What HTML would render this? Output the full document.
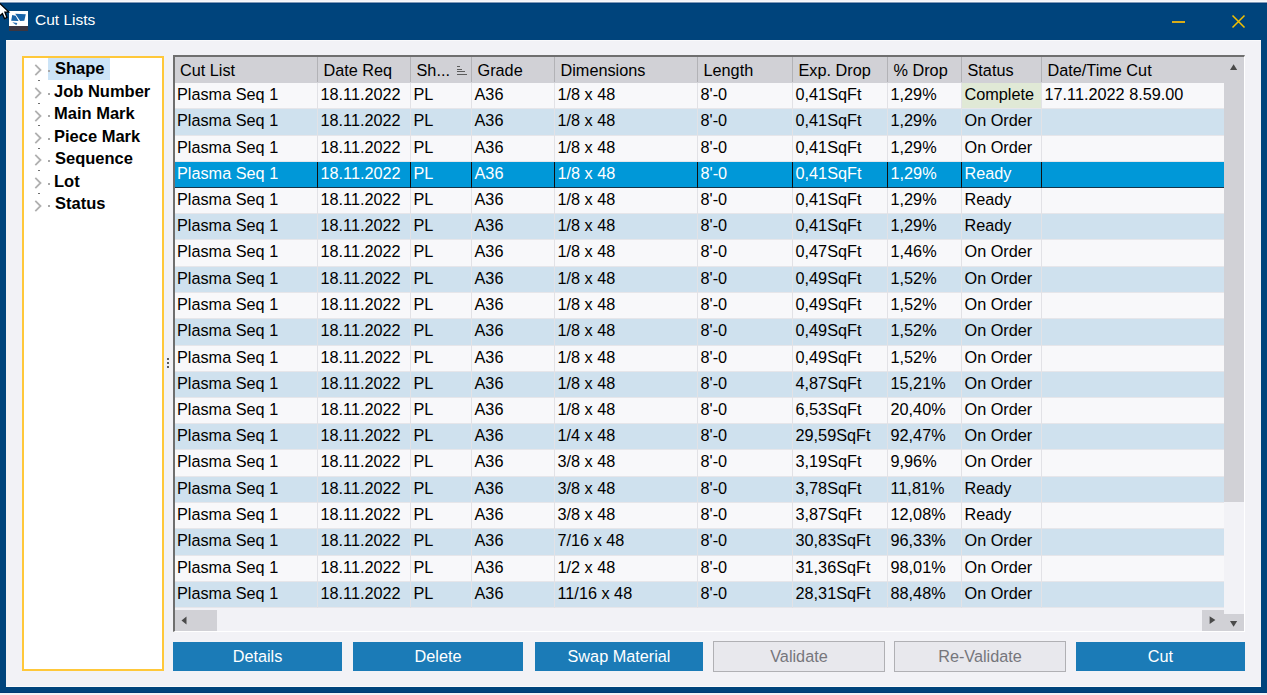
<!DOCTYPE html><html><head><meta charset="utf-8"><style>
*{margin:0;padding:0;box-sizing:border-box}
html,body{width:1267px;height:695px;overflow:hidden;background:#f2f2f6;font-family:"Liberation Sans",sans-serif}
.a{position:absolute}
.tx{font-size:16.25px;line-height:26px;white-space:nowrap;color:#000}
.ti{font-size:16.5px;font-weight:bold;color:#000;line-height:22px;white-space:nowrap}
.btn{font-size:16.25px;text-align:center;color:#fff;background:#1b7bb7;white-space:nowrap}
.dis{background:#e8e8ed;border:1px solid #b0b0b4;color:#76767c}
</style></head><body>
<div class="a" style="left:0;top:1px;width:1267px;height:1px;background:#f9f9fb"></div>
<div class="a" style="left:0;top:2px;width:1267px;height:691px;background:#00447c"></div>
<div class="a" style="left:0;top:2px;width:1267px;height:1px;background:#7f9ab8"></div>
<div class="a" style="left:0;top:3px;width:1267px;height:1px;background:#003c78"></div>
<div class="a" style="left:0;top:692px;width:1267px;height:1px;background:#003c76"></div>
<div class="a" style="left:9px;top:11px;width:19px;height:15px;background:#fff"></div>
<div class="a" style="left:9px;top:26px;width:19px;height:4.5px;background:#3b3641"></div>
<svg class="a" style="left:9px;top:11px" width="19" height="15" viewBox="0 0 19 15"><path d="M6.2 2.8 L16.8 3.2 L15.3 9.7 L11.2 9.9 Z" fill="#1763a8"/><path d="M3.2 4.1 L6.6 4.7 L9.6 9.9 L2.2 9.7 Z" fill="#1763a8"/><path d="M3.3 11.2 L8.3 12 L7.4 14.3 Z" fill="#2a6db0"/></svg>
<div class="a" style="left:35px;top:10px;font-size:15.5px;line-height:20px;color:#fff;white-space:nowrap">Cut Lists</div>
<div class="a" style="left:1172px;top:21px;width:13px;height:1.5px;background:#d8ab18"></div>
<svg class="a" style="left:1230px;top:13px" width="17" height="17" viewBox="0 0 17 17"><path d="M2.5 2.5 L14.5 14.5 M14.5 2.5 L2.5 14.5" stroke="#f5c000" stroke-width="1.5"/></svg>
<div class="a" style="left:6px;top:40px;width:1255px;height:647px;background:#f2f2f6"></div>
<div class="a" style="left:6px;top:40px;width:1255px;height:1px;background:#f9f9fb"></div>
<div class="a" style="left:6px;top:686px;width:1255px;height:1px;background:#fbfbfc"></div>
<div class="a" style="left:22px;top:56px;width:142px;height:615px;background:#fff;border:2px solid #ffc83a"></div>
<div class="a" style="left:48px;top:58px;width:62px;height:22px;background:#cce4f7"></div>
<div class="a ti" style="left:55px;top:57px">Shape</div>
<svg class="a" style="left:33px;top:63px" width="10" height="14" viewBox="0 0 10 14"><path d="M2.3 1.9 L7.5 7 L2.3 12.1" fill="none" stroke="#b0b0b0" stroke-width="1.8"/></svg>
<div class="a" style="left:48px;top:70px;width:2px;height:2px;background:#a8a8a8"></div>
<div class="a" style="left:38px;top:80px;width:2px;height:1px;background:#707070"></div>
<div class="a ti" style="left:54px;top:80px">Job Number</div>
<svg class="a" style="left:33px;top:86px" width="10" height="14" viewBox="0 0 10 14"><path d="M2.3 1.9 L7.5 7 L2.3 12.1" fill="none" stroke="#b0b0b0" stroke-width="1.8"/></svg>
<div class="a" style="left:48px;top:93px;width:2px;height:2px;background:#a8a8a8"></div>
<div class="a" style="left:38px;top:103px;width:2px;height:1px;background:#707070"></div>
<div class="a ti" style="left:54px;top:102px">Main Mark</div>
<svg class="a" style="left:33px;top:109px" width="10" height="14" viewBox="0 0 10 14"><path d="M2.3 1.9 L7.5 7 L2.3 12.1" fill="none" stroke="#b0b0b0" stroke-width="1.8"/></svg>
<div class="a" style="left:48px;top:115px;width:2px;height:2px;background:#a8a8a8"></div>
<div class="a" style="left:38px;top:125px;width:2px;height:1px;background:#707070"></div>
<div class="a ti" style="left:54px;top:125px">Piece Mark</div>
<svg class="a" style="left:33px;top:131px" width="10" height="14" viewBox="0 0 10 14"><path d="M2.3 1.9 L7.5 7 L2.3 12.1" fill="none" stroke="#b0b0b0" stroke-width="1.8"/></svg>
<div class="a" style="left:48px;top:138px;width:2px;height:2px;background:#a8a8a8"></div>
<div class="a" style="left:38px;top:148px;width:2px;height:1px;background:#707070"></div>
<div class="a ti" style="left:55px;top:147px">Sequence</div>
<svg class="a" style="left:33px;top:153px" width="10" height="14" viewBox="0 0 10 14"><path d="M2.3 1.9 L7.5 7 L2.3 12.1" fill="none" stroke="#b0b0b0" stroke-width="1.8"/></svg>
<div class="a" style="left:48px;top:160px;width:2px;height:2px;background:#a8a8a8"></div>
<div class="a" style="left:38px;top:170px;width:2px;height:1px;background:#707070"></div>
<div class="a ti" style="left:54px;top:170px">Lot</div>
<svg class="a" style="left:33px;top:176px" width="10" height="14" viewBox="0 0 10 14"><path d="M2.3 1.9 L7.5 7 L2.3 12.1" fill="none" stroke="#b0b0b0" stroke-width="1.8"/></svg>
<div class="a" style="left:48px;top:183px;width:2px;height:2px;background:#a8a8a8"></div>
<div class="a" style="left:38px;top:193px;width:2px;height:1px;background:#707070"></div>
<div class="a ti" style="left:55px;top:192px">Status</div>
<svg class="a" style="left:33px;top:199px" width="10" height="14" viewBox="0 0 10 14"><path d="M2.3 1.9 L7.5 7 L2.3 12.1" fill="none" stroke="#b0b0b0" stroke-width="1.8"/></svg>
<div class="a" style="left:48px;top:205px;width:2px;height:2px;background:#a8a8a8"></div>
<div class="a" style="left:173px;top:55px;width:73px;height:0"></div>
<div class="a" style="left:173px;top:55px;width:1072px;height:577px;background:#f2f2f6;border-left:2px solid #6f6f6f;border-top:2px solid #6f6f6f;border-right:1px solid #fff;border-bottom:1px solid #fff"></div>
<div class="a" style="left:175px;top:57px;width:1069px;height:26px;background:#d1d1d6"></div>
<div class="a tx" style="left:180px;top:57px">Cut List</div>
<div class="a" style="left:317px;top:57px;width:1px;height:25px;background:#b2b2b6"></div>
<div class="a tx" style="left:323.5px;top:57px">Date Req</div>
<div class="a" style="left:410px;top:57px;width:1px;height:25px;background:#b2b2b6"></div>
<div class="a tx" style="left:416.5px;top:57px">Sh...</div>
<div class="a" style="left:471px;top:57px;width:1px;height:25px;background:#b2b2b6"></div>
<div class="a tx" style="left:477.5px;top:57px">Grade</div>
<div class="a" style="left:554px;top:57px;width:1px;height:25px;background:#b2b2b6"></div>
<div class="a tx" style="left:560.5px;top:57px">Dimensions</div>
<div class="a" style="left:697px;top:57px;width:1px;height:25px;background:#b2b2b6"></div>
<div class="a tx" style="left:703.5px;top:57px">Length</div>
<div class="a" style="left:792px;top:57px;width:1px;height:25px;background:#b2b2b6"></div>
<div class="a tx" style="left:798.5px;top:57px">Exp. Drop</div>
<div class="a" style="left:887px;top:57px;width:1px;height:25px;background:#b2b2b6"></div>
<div class="a tx" style="left:893.5px;top:57px">% Drop</div>
<div class="a" style="left:961px;top:57px;width:1px;height:25px;background:#b2b2b6"></div>
<div class="a tx" style="left:967.5px;top:57px">Status</div>
<div class="a" style="left:1041px;top:57px;width:1px;height:25px;background:#b2b2b6"></div>
<div class="a tx" style="left:1047.5px;top:57px">Date/Time Cut</div>
<div class="a" style="left:457px;top:66px;width:3px;height:1px;background:#5c5c5c"></div>
<div class="a" style="left:457px;top:69px;width:5px;height:1px;background:#5c5c5c"></div>
<div class="a" style="left:457px;top:71px;width:8px;height:1px;background:#5c5c5c"></div>
<div class="a" style="left:457px;top:74px;width:10px;height:1px;background:#5c5c5c"></div>
<div class="a" style="left:175px;top:83px;width:1049px;height:26px;background:#f8f8fa"></div>
<div class="a" style="left:175px;top:108px;width:1049px;height:1px;background:#e6e6ea"></div>
<div class="a" style="left:962px;top:83px;width:79px;height:25px;background:#e0e9d6"></div>
<div class="a tx" style="left:177px;top:81px;color:#000">Plasma Seq 1</div>
<div class="a" style="left:317px;top:83px;width:1px;height:26px;background:#e2e2e6"></div>
<div class="a tx" style="left:320.5px;top:81px;color:#000">18.11.2022</div>
<div class="a" style="left:410px;top:83px;width:1px;height:26px;background:#e2e2e6"></div>
<div class="a tx" style="left:413.5px;top:81px;color:#000">PL</div>
<div class="a" style="left:471px;top:83px;width:1px;height:26px;background:#e2e2e6"></div>
<div class="a tx" style="left:474.5px;top:81px;color:#000">A36</div>
<div class="a" style="left:554px;top:83px;width:1px;height:26px;background:#e2e2e6"></div>
<div class="a tx" style="left:557.5px;top:81px;color:#000">1/8 x 48</div>
<div class="a" style="left:697px;top:83px;width:1px;height:26px;background:#e2e2e6"></div>
<div class="a tx" style="left:700.5px;top:81px;color:#000">8'-0</div>
<div class="a" style="left:792px;top:83px;width:1px;height:26px;background:#e2e2e6"></div>
<div class="a tx" style="left:795.5px;top:81px;color:#000">0,41SqFt</div>
<div class="a" style="left:887px;top:83px;width:1px;height:26px;background:#e2e2e6"></div>
<div class="a tx" style="left:890.5px;top:81px;color:#000">1,29%</div>
<div class="a" style="left:961px;top:83px;width:1px;height:26px;background:#e2e2e6"></div>
<div class="a tx" style="left:964.5px;top:81px;color:#000">Complete</div>
<div class="a" style="left:1041px;top:83px;width:1px;height:26px;background:#e2e2e6"></div>
<div class="a tx" style="left:1044.5px;top:81px;color:#000">17.11.2022 8.59.00</div>
<div class="a" style="left:175px;top:109px;width:1049px;height:27px;background:#cfe1ee"></div>
<div class="a" style="left:175px;top:135px;width:1049px;height:1px;background:#e6e6ea"></div>
<div class="a tx" style="left:177px;top:107px;color:#000">Plasma Seq 1</div>
<div class="a" style="left:317px;top:109px;width:1px;height:27px;background:#e2e2e6"></div>
<div class="a tx" style="left:320.5px;top:107px;color:#000">18.11.2022</div>
<div class="a" style="left:410px;top:109px;width:1px;height:27px;background:#e2e2e6"></div>
<div class="a tx" style="left:413.5px;top:107px;color:#000">PL</div>
<div class="a" style="left:471px;top:109px;width:1px;height:27px;background:#e2e2e6"></div>
<div class="a tx" style="left:474.5px;top:107px;color:#000">A36</div>
<div class="a" style="left:554px;top:109px;width:1px;height:27px;background:#e2e2e6"></div>
<div class="a tx" style="left:557.5px;top:107px;color:#000">1/8 x 48</div>
<div class="a" style="left:697px;top:109px;width:1px;height:27px;background:#e2e2e6"></div>
<div class="a tx" style="left:700.5px;top:107px;color:#000">8'-0</div>
<div class="a" style="left:792px;top:109px;width:1px;height:27px;background:#e2e2e6"></div>
<div class="a tx" style="left:795.5px;top:107px;color:#000">0,41SqFt</div>
<div class="a" style="left:887px;top:109px;width:1px;height:27px;background:#e2e2e6"></div>
<div class="a tx" style="left:890.5px;top:107px;color:#000">1,29%</div>
<div class="a" style="left:961px;top:109px;width:1px;height:27px;background:#e2e2e6"></div>
<div class="a tx" style="left:964.5px;top:107px;color:#000">On Order</div>
<div class="a" style="left:1041px;top:109px;width:1px;height:27px;background:#e2e2e6"></div>
<div class="a" style="left:175px;top:136px;width:1049px;height:26px;background:#f8f8fa"></div>
<div class="a" style="left:175px;top:161px;width:1049px;height:1px;background:#e6e6ea"></div>
<div class="a tx" style="left:177px;top:134px;color:#000">Plasma Seq 1</div>
<div class="a" style="left:317px;top:136px;width:1px;height:26px;background:#e2e2e6"></div>
<div class="a tx" style="left:320.5px;top:134px;color:#000">18.11.2022</div>
<div class="a" style="left:410px;top:136px;width:1px;height:26px;background:#e2e2e6"></div>
<div class="a tx" style="left:413.5px;top:134px;color:#000">PL</div>
<div class="a" style="left:471px;top:136px;width:1px;height:26px;background:#e2e2e6"></div>
<div class="a tx" style="left:474.5px;top:134px;color:#000">A36</div>
<div class="a" style="left:554px;top:136px;width:1px;height:26px;background:#e2e2e6"></div>
<div class="a tx" style="left:557.5px;top:134px;color:#000">1/8 x 48</div>
<div class="a" style="left:697px;top:136px;width:1px;height:26px;background:#e2e2e6"></div>
<div class="a tx" style="left:700.5px;top:134px;color:#000">8'-0</div>
<div class="a" style="left:792px;top:136px;width:1px;height:26px;background:#e2e2e6"></div>
<div class="a tx" style="left:795.5px;top:134px;color:#000">0,41SqFt</div>
<div class="a" style="left:887px;top:136px;width:1px;height:26px;background:#e2e2e6"></div>
<div class="a tx" style="left:890.5px;top:134px;color:#000">1,29%</div>
<div class="a" style="left:961px;top:136px;width:1px;height:26px;background:#e2e2e6"></div>
<div class="a tx" style="left:964.5px;top:134px;color:#000">On Order</div>
<div class="a" style="left:1041px;top:136px;width:1px;height:26px;background:#e2e2e6"></div>
<div class="a" style="left:175px;top:162px;width:1049px;height:26px;background:#0098d8"></div>
<div class="a" style="left:175px;top:187px;width:1049px;height:1px;background:#15354a"></div>
<div class="a tx" style="left:177px;top:160px;color:#fff">Plasma Seq 1</div>
<div class="a" style="left:317px;top:162px;width:1px;height:26px;background:#111"></div>
<div class="a tx" style="left:320.5px;top:160px;color:#fff">18.11.2022</div>
<div class="a" style="left:410px;top:162px;width:1px;height:26px;background:#111"></div>
<div class="a tx" style="left:413.5px;top:160px;color:#fff">PL</div>
<div class="a" style="left:471px;top:162px;width:1px;height:26px;background:#111"></div>
<div class="a tx" style="left:474.5px;top:160px;color:#fff">A36</div>
<div class="a" style="left:554px;top:162px;width:1px;height:26px;background:#111"></div>
<div class="a tx" style="left:557.5px;top:160px;color:#fff">1/8 x 48</div>
<div class="a" style="left:697px;top:162px;width:1px;height:26px;background:#111"></div>
<div class="a tx" style="left:700.5px;top:160px;color:#fff">8'-0</div>
<div class="a" style="left:792px;top:162px;width:1px;height:26px;background:#111"></div>
<div class="a tx" style="left:795.5px;top:160px;color:#fff">0,41SqFt</div>
<div class="a" style="left:887px;top:162px;width:1px;height:26px;background:#111"></div>
<div class="a tx" style="left:890.5px;top:160px;color:#fff">1,29%</div>
<div class="a" style="left:961px;top:162px;width:1px;height:26px;background:#111"></div>
<div class="a tx" style="left:964.5px;top:160px;color:#fff">Ready</div>
<div class="a" style="left:1041px;top:162px;width:1px;height:26px;background:#111"></div>
<div class="a" style="left:175px;top:188px;width:1049px;height:26px;background:#f8f8fa"></div>
<div class="a" style="left:175px;top:213px;width:1049px;height:1px;background:#e6e6ea"></div>
<div class="a tx" style="left:177px;top:186px;color:#000">Plasma Seq 1</div>
<div class="a" style="left:317px;top:188px;width:1px;height:26px;background:#e2e2e6"></div>
<div class="a tx" style="left:320.5px;top:186px;color:#000">18.11.2022</div>
<div class="a" style="left:410px;top:188px;width:1px;height:26px;background:#e2e2e6"></div>
<div class="a tx" style="left:413.5px;top:186px;color:#000">PL</div>
<div class="a" style="left:471px;top:188px;width:1px;height:26px;background:#e2e2e6"></div>
<div class="a tx" style="left:474.5px;top:186px;color:#000">A36</div>
<div class="a" style="left:554px;top:188px;width:1px;height:26px;background:#e2e2e6"></div>
<div class="a tx" style="left:557.5px;top:186px;color:#000">1/8 x 48</div>
<div class="a" style="left:697px;top:188px;width:1px;height:26px;background:#e2e2e6"></div>
<div class="a tx" style="left:700.5px;top:186px;color:#000">8'-0</div>
<div class="a" style="left:792px;top:188px;width:1px;height:26px;background:#e2e2e6"></div>
<div class="a tx" style="left:795.5px;top:186px;color:#000">0,41SqFt</div>
<div class="a" style="left:887px;top:188px;width:1px;height:26px;background:#e2e2e6"></div>
<div class="a tx" style="left:890.5px;top:186px;color:#000">1,29%</div>
<div class="a" style="left:961px;top:188px;width:1px;height:26px;background:#e2e2e6"></div>
<div class="a tx" style="left:964.5px;top:186px;color:#000">Ready</div>
<div class="a" style="left:1041px;top:188px;width:1px;height:26px;background:#e2e2e6"></div>
<div class="a" style="left:175px;top:214px;width:1049px;height:26px;background:#cfe1ee"></div>
<div class="a" style="left:175px;top:239px;width:1049px;height:1px;background:#e6e6ea"></div>
<div class="a tx" style="left:177px;top:212px;color:#000">Plasma Seq 1</div>
<div class="a" style="left:317px;top:214px;width:1px;height:26px;background:#e2e2e6"></div>
<div class="a tx" style="left:320.5px;top:212px;color:#000">18.11.2022</div>
<div class="a" style="left:410px;top:214px;width:1px;height:26px;background:#e2e2e6"></div>
<div class="a tx" style="left:413.5px;top:212px;color:#000">PL</div>
<div class="a" style="left:471px;top:214px;width:1px;height:26px;background:#e2e2e6"></div>
<div class="a tx" style="left:474.5px;top:212px;color:#000">A36</div>
<div class="a" style="left:554px;top:214px;width:1px;height:26px;background:#e2e2e6"></div>
<div class="a tx" style="left:557.5px;top:212px;color:#000">1/8 x 48</div>
<div class="a" style="left:697px;top:214px;width:1px;height:26px;background:#e2e2e6"></div>
<div class="a tx" style="left:700.5px;top:212px;color:#000">8'-0</div>
<div class="a" style="left:792px;top:214px;width:1px;height:26px;background:#e2e2e6"></div>
<div class="a tx" style="left:795.5px;top:212px;color:#000">0,41SqFt</div>
<div class="a" style="left:887px;top:214px;width:1px;height:26px;background:#e2e2e6"></div>
<div class="a tx" style="left:890.5px;top:212px;color:#000">1,29%</div>
<div class="a" style="left:961px;top:214px;width:1px;height:26px;background:#e2e2e6"></div>
<div class="a tx" style="left:964.5px;top:212px;color:#000">Ready</div>
<div class="a" style="left:1041px;top:214px;width:1px;height:26px;background:#e2e2e6"></div>
<div class="a" style="left:175px;top:240px;width:1049px;height:27px;background:#f8f8fa"></div>
<div class="a" style="left:175px;top:266px;width:1049px;height:1px;background:#e6e6ea"></div>
<div class="a tx" style="left:177px;top:238px;color:#000">Plasma Seq 1</div>
<div class="a" style="left:317px;top:240px;width:1px;height:27px;background:#e2e2e6"></div>
<div class="a tx" style="left:320.5px;top:238px;color:#000">18.11.2022</div>
<div class="a" style="left:410px;top:240px;width:1px;height:27px;background:#e2e2e6"></div>
<div class="a tx" style="left:413.5px;top:238px;color:#000">PL</div>
<div class="a" style="left:471px;top:240px;width:1px;height:27px;background:#e2e2e6"></div>
<div class="a tx" style="left:474.5px;top:238px;color:#000">A36</div>
<div class="a" style="left:554px;top:240px;width:1px;height:27px;background:#e2e2e6"></div>
<div class="a tx" style="left:557.5px;top:238px;color:#000">1/8 x 48</div>
<div class="a" style="left:697px;top:240px;width:1px;height:27px;background:#e2e2e6"></div>
<div class="a tx" style="left:700.5px;top:238px;color:#000">8'-0</div>
<div class="a" style="left:792px;top:240px;width:1px;height:27px;background:#e2e2e6"></div>
<div class="a tx" style="left:795.5px;top:238px;color:#000">0,47SqFt</div>
<div class="a" style="left:887px;top:240px;width:1px;height:27px;background:#e2e2e6"></div>
<div class="a tx" style="left:890.5px;top:238px;color:#000">1,46%</div>
<div class="a" style="left:961px;top:240px;width:1px;height:27px;background:#e2e2e6"></div>
<div class="a tx" style="left:964.5px;top:238px;color:#000">On Order</div>
<div class="a" style="left:1041px;top:240px;width:1px;height:27px;background:#e2e2e6"></div>
<div class="a" style="left:175px;top:267px;width:1049px;height:26px;background:#cfe1ee"></div>
<div class="a" style="left:175px;top:292px;width:1049px;height:1px;background:#e6e6ea"></div>
<div class="a tx" style="left:177px;top:265px;color:#000">Plasma Seq 1</div>
<div class="a" style="left:317px;top:267px;width:1px;height:26px;background:#e2e2e6"></div>
<div class="a tx" style="left:320.5px;top:265px;color:#000">18.11.2022</div>
<div class="a" style="left:410px;top:267px;width:1px;height:26px;background:#e2e2e6"></div>
<div class="a tx" style="left:413.5px;top:265px;color:#000">PL</div>
<div class="a" style="left:471px;top:267px;width:1px;height:26px;background:#e2e2e6"></div>
<div class="a tx" style="left:474.5px;top:265px;color:#000">A36</div>
<div class="a" style="left:554px;top:267px;width:1px;height:26px;background:#e2e2e6"></div>
<div class="a tx" style="left:557.5px;top:265px;color:#000">1/8 x 48</div>
<div class="a" style="left:697px;top:267px;width:1px;height:26px;background:#e2e2e6"></div>
<div class="a tx" style="left:700.5px;top:265px;color:#000">8'-0</div>
<div class="a" style="left:792px;top:267px;width:1px;height:26px;background:#e2e2e6"></div>
<div class="a tx" style="left:795.5px;top:265px;color:#000">0,49SqFt</div>
<div class="a" style="left:887px;top:267px;width:1px;height:26px;background:#e2e2e6"></div>
<div class="a tx" style="left:890.5px;top:265px;color:#000">1,52%</div>
<div class="a" style="left:961px;top:267px;width:1px;height:26px;background:#e2e2e6"></div>
<div class="a tx" style="left:964.5px;top:265px;color:#000">On Order</div>
<div class="a" style="left:1041px;top:267px;width:1px;height:26px;background:#e2e2e6"></div>
<div class="a" style="left:175px;top:293px;width:1049px;height:26px;background:#f8f8fa"></div>
<div class="a" style="left:175px;top:318px;width:1049px;height:1px;background:#e6e6ea"></div>
<div class="a tx" style="left:177px;top:291px;color:#000">Plasma Seq 1</div>
<div class="a" style="left:317px;top:293px;width:1px;height:26px;background:#e2e2e6"></div>
<div class="a tx" style="left:320.5px;top:291px;color:#000">18.11.2022</div>
<div class="a" style="left:410px;top:293px;width:1px;height:26px;background:#e2e2e6"></div>
<div class="a tx" style="left:413.5px;top:291px;color:#000">PL</div>
<div class="a" style="left:471px;top:293px;width:1px;height:26px;background:#e2e2e6"></div>
<div class="a tx" style="left:474.5px;top:291px;color:#000">A36</div>
<div class="a" style="left:554px;top:293px;width:1px;height:26px;background:#e2e2e6"></div>
<div class="a tx" style="left:557.5px;top:291px;color:#000">1/8 x 48</div>
<div class="a" style="left:697px;top:293px;width:1px;height:26px;background:#e2e2e6"></div>
<div class="a tx" style="left:700.5px;top:291px;color:#000">8'-0</div>
<div class="a" style="left:792px;top:293px;width:1px;height:26px;background:#e2e2e6"></div>
<div class="a tx" style="left:795.5px;top:291px;color:#000">0,49SqFt</div>
<div class="a" style="left:887px;top:293px;width:1px;height:26px;background:#e2e2e6"></div>
<div class="a tx" style="left:890.5px;top:291px;color:#000">1,52%</div>
<div class="a" style="left:961px;top:293px;width:1px;height:26px;background:#e2e2e6"></div>
<div class="a tx" style="left:964.5px;top:291px;color:#000">On Order</div>
<div class="a" style="left:1041px;top:293px;width:1px;height:26px;background:#e2e2e6"></div>
<div class="a" style="left:175px;top:319px;width:1049px;height:27px;background:#cfe1ee"></div>
<div class="a" style="left:175px;top:345px;width:1049px;height:1px;background:#e6e6ea"></div>
<div class="a tx" style="left:177px;top:317px;color:#000">Plasma Seq 1</div>
<div class="a" style="left:317px;top:319px;width:1px;height:27px;background:#e2e2e6"></div>
<div class="a tx" style="left:320.5px;top:317px;color:#000">18.11.2022</div>
<div class="a" style="left:410px;top:319px;width:1px;height:27px;background:#e2e2e6"></div>
<div class="a tx" style="left:413.5px;top:317px;color:#000">PL</div>
<div class="a" style="left:471px;top:319px;width:1px;height:27px;background:#e2e2e6"></div>
<div class="a tx" style="left:474.5px;top:317px;color:#000">A36</div>
<div class="a" style="left:554px;top:319px;width:1px;height:27px;background:#e2e2e6"></div>
<div class="a tx" style="left:557.5px;top:317px;color:#000">1/8 x 48</div>
<div class="a" style="left:697px;top:319px;width:1px;height:27px;background:#e2e2e6"></div>
<div class="a tx" style="left:700.5px;top:317px;color:#000">8'-0</div>
<div class="a" style="left:792px;top:319px;width:1px;height:27px;background:#e2e2e6"></div>
<div class="a tx" style="left:795.5px;top:317px;color:#000">0,49SqFt</div>
<div class="a" style="left:887px;top:319px;width:1px;height:27px;background:#e2e2e6"></div>
<div class="a tx" style="left:890.5px;top:317px;color:#000">1,52%</div>
<div class="a" style="left:961px;top:319px;width:1px;height:27px;background:#e2e2e6"></div>
<div class="a tx" style="left:964.5px;top:317px;color:#000">On Order</div>
<div class="a" style="left:1041px;top:319px;width:1px;height:27px;background:#e2e2e6"></div>
<div class="a" style="left:175px;top:346px;width:1049px;height:26px;background:#f8f8fa"></div>
<div class="a" style="left:175px;top:371px;width:1049px;height:1px;background:#e6e6ea"></div>
<div class="a tx" style="left:177px;top:344px;color:#000">Plasma Seq 1</div>
<div class="a" style="left:317px;top:346px;width:1px;height:26px;background:#e2e2e6"></div>
<div class="a tx" style="left:320.5px;top:344px;color:#000">18.11.2022</div>
<div class="a" style="left:410px;top:346px;width:1px;height:26px;background:#e2e2e6"></div>
<div class="a tx" style="left:413.5px;top:344px;color:#000">PL</div>
<div class="a" style="left:471px;top:346px;width:1px;height:26px;background:#e2e2e6"></div>
<div class="a tx" style="left:474.5px;top:344px;color:#000">A36</div>
<div class="a" style="left:554px;top:346px;width:1px;height:26px;background:#e2e2e6"></div>
<div class="a tx" style="left:557.5px;top:344px;color:#000">1/8 x 48</div>
<div class="a" style="left:697px;top:346px;width:1px;height:26px;background:#e2e2e6"></div>
<div class="a tx" style="left:700.5px;top:344px;color:#000">8'-0</div>
<div class="a" style="left:792px;top:346px;width:1px;height:26px;background:#e2e2e6"></div>
<div class="a tx" style="left:795.5px;top:344px;color:#000">0,49SqFt</div>
<div class="a" style="left:887px;top:346px;width:1px;height:26px;background:#e2e2e6"></div>
<div class="a tx" style="left:890.5px;top:344px;color:#000">1,52%</div>
<div class="a" style="left:961px;top:346px;width:1px;height:26px;background:#e2e2e6"></div>
<div class="a tx" style="left:964.5px;top:344px;color:#000">On Order</div>
<div class="a" style="left:1041px;top:346px;width:1px;height:26px;background:#e2e2e6"></div>
<div class="a" style="left:175px;top:372px;width:1049px;height:26px;background:#cfe1ee"></div>
<div class="a" style="left:175px;top:397px;width:1049px;height:1px;background:#e6e6ea"></div>
<div class="a tx" style="left:177px;top:370px;color:#000">Plasma Seq 1</div>
<div class="a" style="left:317px;top:372px;width:1px;height:26px;background:#e2e2e6"></div>
<div class="a tx" style="left:320.5px;top:370px;color:#000">18.11.2022</div>
<div class="a" style="left:410px;top:372px;width:1px;height:26px;background:#e2e2e6"></div>
<div class="a tx" style="left:413.5px;top:370px;color:#000">PL</div>
<div class="a" style="left:471px;top:372px;width:1px;height:26px;background:#e2e2e6"></div>
<div class="a tx" style="left:474.5px;top:370px;color:#000">A36</div>
<div class="a" style="left:554px;top:372px;width:1px;height:26px;background:#e2e2e6"></div>
<div class="a tx" style="left:557.5px;top:370px;color:#000">1/8 x 48</div>
<div class="a" style="left:697px;top:372px;width:1px;height:26px;background:#e2e2e6"></div>
<div class="a tx" style="left:700.5px;top:370px;color:#000">8'-0</div>
<div class="a" style="left:792px;top:372px;width:1px;height:26px;background:#e2e2e6"></div>
<div class="a tx" style="left:795.5px;top:370px;color:#000">4,87SqFt</div>
<div class="a" style="left:887px;top:372px;width:1px;height:26px;background:#e2e2e6"></div>
<div class="a tx" style="left:890.5px;top:370px;color:#000">15,21%</div>
<div class="a" style="left:961px;top:372px;width:1px;height:26px;background:#e2e2e6"></div>
<div class="a tx" style="left:964.5px;top:370px;color:#000">On Order</div>
<div class="a" style="left:1041px;top:372px;width:1px;height:26px;background:#e2e2e6"></div>
<div class="a" style="left:175px;top:398px;width:1049px;height:26px;background:#f8f8fa"></div>
<div class="a" style="left:175px;top:423px;width:1049px;height:1px;background:#e6e6ea"></div>
<div class="a tx" style="left:177px;top:396px;color:#000">Plasma Seq 1</div>
<div class="a" style="left:317px;top:398px;width:1px;height:26px;background:#e2e2e6"></div>
<div class="a tx" style="left:320.5px;top:396px;color:#000">18.11.2022</div>
<div class="a" style="left:410px;top:398px;width:1px;height:26px;background:#e2e2e6"></div>
<div class="a tx" style="left:413.5px;top:396px;color:#000">PL</div>
<div class="a" style="left:471px;top:398px;width:1px;height:26px;background:#e2e2e6"></div>
<div class="a tx" style="left:474.5px;top:396px;color:#000">A36</div>
<div class="a" style="left:554px;top:398px;width:1px;height:26px;background:#e2e2e6"></div>
<div class="a tx" style="left:557.5px;top:396px;color:#000">1/8 x 48</div>
<div class="a" style="left:697px;top:398px;width:1px;height:26px;background:#e2e2e6"></div>
<div class="a tx" style="left:700.5px;top:396px;color:#000">8'-0</div>
<div class="a" style="left:792px;top:398px;width:1px;height:26px;background:#e2e2e6"></div>
<div class="a tx" style="left:795.5px;top:396px;color:#000">6,53SqFt</div>
<div class="a" style="left:887px;top:398px;width:1px;height:26px;background:#e2e2e6"></div>
<div class="a tx" style="left:890.5px;top:396px;color:#000">20,40%</div>
<div class="a" style="left:961px;top:398px;width:1px;height:26px;background:#e2e2e6"></div>
<div class="a tx" style="left:964.5px;top:396px;color:#000">On Order</div>
<div class="a" style="left:1041px;top:398px;width:1px;height:26px;background:#e2e2e6"></div>
<div class="a" style="left:175px;top:424px;width:1049px;height:26px;background:#cfe1ee"></div>
<div class="a" style="left:175px;top:449px;width:1049px;height:1px;background:#e6e6ea"></div>
<div class="a tx" style="left:177px;top:422px;color:#000">Plasma Seq 1</div>
<div class="a" style="left:317px;top:424px;width:1px;height:26px;background:#e2e2e6"></div>
<div class="a tx" style="left:320.5px;top:422px;color:#000">18.11.2022</div>
<div class="a" style="left:410px;top:424px;width:1px;height:26px;background:#e2e2e6"></div>
<div class="a tx" style="left:413.5px;top:422px;color:#000">PL</div>
<div class="a" style="left:471px;top:424px;width:1px;height:26px;background:#e2e2e6"></div>
<div class="a tx" style="left:474.5px;top:422px;color:#000">A36</div>
<div class="a" style="left:554px;top:424px;width:1px;height:26px;background:#e2e2e6"></div>
<div class="a tx" style="left:557.5px;top:422px;color:#000">1/4 x 48</div>
<div class="a" style="left:697px;top:424px;width:1px;height:26px;background:#e2e2e6"></div>
<div class="a tx" style="left:700.5px;top:422px;color:#000">8'-0</div>
<div class="a" style="left:792px;top:424px;width:1px;height:26px;background:#e2e2e6"></div>
<div class="a tx" style="left:795.5px;top:422px;color:#000">29,59SqFt</div>
<div class="a" style="left:887px;top:424px;width:1px;height:26px;background:#e2e2e6"></div>
<div class="a tx" style="left:890.5px;top:422px;color:#000">92,47%</div>
<div class="a" style="left:961px;top:424px;width:1px;height:26px;background:#e2e2e6"></div>
<div class="a tx" style="left:964.5px;top:422px;color:#000">On Order</div>
<div class="a" style="left:1041px;top:424px;width:1px;height:26px;background:#e2e2e6"></div>
<div class="a" style="left:175px;top:450px;width:1049px;height:27px;background:#f8f8fa"></div>
<div class="a" style="left:175px;top:476px;width:1049px;height:1px;background:#e6e6ea"></div>
<div class="a tx" style="left:177px;top:448px;color:#000">Plasma Seq 1</div>
<div class="a" style="left:317px;top:450px;width:1px;height:27px;background:#e2e2e6"></div>
<div class="a tx" style="left:320.5px;top:448px;color:#000">18.11.2022</div>
<div class="a" style="left:410px;top:450px;width:1px;height:27px;background:#e2e2e6"></div>
<div class="a tx" style="left:413.5px;top:448px;color:#000">PL</div>
<div class="a" style="left:471px;top:450px;width:1px;height:27px;background:#e2e2e6"></div>
<div class="a tx" style="left:474.5px;top:448px;color:#000">A36</div>
<div class="a" style="left:554px;top:450px;width:1px;height:27px;background:#e2e2e6"></div>
<div class="a tx" style="left:557.5px;top:448px;color:#000">3/8 x 48</div>
<div class="a" style="left:697px;top:450px;width:1px;height:27px;background:#e2e2e6"></div>
<div class="a tx" style="left:700.5px;top:448px;color:#000">8'-0</div>
<div class="a" style="left:792px;top:450px;width:1px;height:27px;background:#e2e2e6"></div>
<div class="a tx" style="left:795.5px;top:448px;color:#000">3,19SqFt</div>
<div class="a" style="left:887px;top:450px;width:1px;height:27px;background:#e2e2e6"></div>
<div class="a tx" style="left:890.5px;top:448px;color:#000">9,96%</div>
<div class="a" style="left:961px;top:450px;width:1px;height:27px;background:#e2e2e6"></div>
<div class="a tx" style="left:964.5px;top:448px;color:#000">On Order</div>
<div class="a" style="left:1041px;top:450px;width:1px;height:27px;background:#e2e2e6"></div>
<div class="a" style="left:175px;top:477px;width:1049px;height:26px;background:#cfe1ee"></div>
<div class="a" style="left:175px;top:502px;width:1049px;height:1px;background:#e6e6ea"></div>
<div class="a tx" style="left:177px;top:475px;color:#000">Plasma Seq 1</div>
<div class="a" style="left:317px;top:477px;width:1px;height:26px;background:#e2e2e6"></div>
<div class="a tx" style="left:320.5px;top:475px;color:#000">18.11.2022</div>
<div class="a" style="left:410px;top:477px;width:1px;height:26px;background:#e2e2e6"></div>
<div class="a tx" style="left:413.5px;top:475px;color:#000">PL</div>
<div class="a" style="left:471px;top:477px;width:1px;height:26px;background:#e2e2e6"></div>
<div class="a tx" style="left:474.5px;top:475px;color:#000">A36</div>
<div class="a" style="left:554px;top:477px;width:1px;height:26px;background:#e2e2e6"></div>
<div class="a tx" style="left:557.5px;top:475px;color:#000">3/8 x 48</div>
<div class="a" style="left:697px;top:477px;width:1px;height:26px;background:#e2e2e6"></div>
<div class="a tx" style="left:700.5px;top:475px;color:#000">8'-0</div>
<div class="a" style="left:792px;top:477px;width:1px;height:26px;background:#e2e2e6"></div>
<div class="a tx" style="left:795.5px;top:475px;color:#000">3,78SqFt</div>
<div class="a" style="left:887px;top:477px;width:1px;height:26px;background:#e2e2e6"></div>
<div class="a tx" style="left:890.5px;top:475px;color:#000">11,81%</div>
<div class="a" style="left:961px;top:477px;width:1px;height:26px;background:#e2e2e6"></div>
<div class="a tx" style="left:964.5px;top:475px;color:#000">Ready</div>
<div class="a" style="left:1041px;top:477px;width:1px;height:26px;background:#e2e2e6"></div>
<div class="a" style="left:175px;top:503px;width:1049px;height:26px;background:#f8f8fa"></div>
<div class="a" style="left:175px;top:528px;width:1049px;height:1px;background:#e6e6ea"></div>
<div class="a tx" style="left:177px;top:501px;color:#000">Plasma Seq 1</div>
<div class="a" style="left:317px;top:503px;width:1px;height:26px;background:#e2e2e6"></div>
<div class="a tx" style="left:320.5px;top:501px;color:#000">18.11.2022</div>
<div class="a" style="left:410px;top:503px;width:1px;height:26px;background:#e2e2e6"></div>
<div class="a tx" style="left:413.5px;top:501px;color:#000">PL</div>
<div class="a" style="left:471px;top:503px;width:1px;height:26px;background:#e2e2e6"></div>
<div class="a tx" style="left:474.5px;top:501px;color:#000">A36</div>
<div class="a" style="left:554px;top:503px;width:1px;height:26px;background:#e2e2e6"></div>
<div class="a tx" style="left:557.5px;top:501px;color:#000">3/8 x 48</div>
<div class="a" style="left:697px;top:503px;width:1px;height:26px;background:#e2e2e6"></div>
<div class="a tx" style="left:700.5px;top:501px;color:#000">8'-0</div>
<div class="a" style="left:792px;top:503px;width:1px;height:26px;background:#e2e2e6"></div>
<div class="a tx" style="left:795.5px;top:501px;color:#000">3,87SqFt</div>
<div class="a" style="left:887px;top:503px;width:1px;height:26px;background:#e2e2e6"></div>
<div class="a tx" style="left:890.5px;top:501px;color:#000">12,08%</div>
<div class="a" style="left:961px;top:503px;width:1px;height:26px;background:#e2e2e6"></div>
<div class="a tx" style="left:964.5px;top:501px;color:#000">Ready</div>
<div class="a" style="left:1041px;top:503px;width:1px;height:26px;background:#e2e2e6"></div>
<div class="a" style="left:175px;top:529px;width:1049px;height:27px;background:#cfe1ee"></div>
<div class="a" style="left:175px;top:555px;width:1049px;height:1px;background:#e6e6ea"></div>
<div class="a tx" style="left:177px;top:527px;color:#000">Plasma Seq 1</div>
<div class="a" style="left:317px;top:529px;width:1px;height:27px;background:#e2e2e6"></div>
<div class="a tx" style="left:320.5px;top:527px;color:#000">18.11.2022</div>
<div class="a" style="left:410px;top:529px;width:1px;height:27px;background:#e2e2e6"></div>
<div class="a tx" style="left:413.5px;top:527px;color:#000">PL</div>
<div class="a" style="left:471px;top:529px;width:1px;height:27px;background:#e2e2e6"></div>
<div class="a tx" style="left:474.5px;top:527px;color:#000">A36</div>
<div class="a" style="left:554px;top:529px;width:1px;height:27px;background:#e2e2e6"></div>
<div class="a tx" style="left:557.5px;top:527px;color:#000">7/16 x 48</div>
<div class="a" style="left:697px;top:529px;width:1px;height:27px;background:#e2e2e6"></div>
<div class="a tx" style="left:700.5px;top:527px;color:#000">8'-0</div>
<div class="a" style="left:792px;top:529px;width:1px;height:27px;background:#e2e2e6"></div>
<div class="a tx" style="left:795.5px;top:527px;color:#000">30,83SqFt</div>
<div class="a" style="left:887px;top:529px;width:1px;height:27px;background:#e2e2e6"></div>
<div class="a tx" style="left:890.5px;top:527px;color:#000">96,33%</div>
<div class="a" style="left:961px;top:529px;width:1px;height:27px;background:#e2e2e6"></div>
<div class="a tx" style="left:964.5px;top:527px;color:#000">On Order</div>
<div class="a" style="left:1041px;top:529px;width:1px;height:27px;background:#e2e2e6"></div>
<div class="a" style="left:175px;top:556px;width:1049px;height:26px;background:#f8f8fa"></div>
<div class="a" style="left:175px;top:581px;width:1049px;height:1px;background:#e6e6ea"></div>
<div class="a tx" style="left:177px;top:554px;color:#000">Plasma Seq 1</div>
<div class="a" style="left:317px;top:556px;width:1px;height:26px;background:#e2e2e6"></div>
<div class="a tx" style="left:320.5px;top:554px;color:#000">18.11.2022</div>
<div class="a" style="left:410px;top:556px;width:1px;height:26px;background:#e2e2e6"></div>
<div class="a tx" style="left:413.5px;top:554px;color:#000">PL</div>
<div class="a" style="left:471px;top:556px;width:1px;height:26px;background:#e2e2e6"></div>
<div class="a tx" style="left:474.5px;top:554px;color:#000">A36</div>
<div class="a" style="left:554px;top:556px;width:1px;height:26px;background:#e2e2e6"></div>
<div class="a tx" style="left:557.5px;top:554px;color:#000">1/2 x 48</div>
<div class="a" style="left:697px;top:556px;width:1px;height:26px;background:#e2e2e6"></div>
<div class="a tx" style="left:700.5px;top:554px;color:#000">8'-0</div>
<div class="a" style="left:792px;top:556px;width:1px;height:26px;background:#e2e2e6"></div>
<div class="a tx" style="left:795.5px;top:554px;color:#000">31,36SqFt</div>
<div class="a" style="left:887px;top:556px;width:1px;height:26px;background:#e2e2e6"></div>
<div class="a tx" style="left:890.5px;top:554px;color:#000">98,01%</div>
<div class="a" style="left:961px;top:556px;width:1px;height:26px;background:#e2e2e6"></div>
<div class="a tx" style="left:964.5px;top:554px;color:#000">On Order</div>
<div class="a" style="left:1041px;top:556px;width:1px;height:26px;background:#e2e2e6"></div>
<div class="a" style="left:175px;top:582px;width:1049px;height:26px;background:#cfe1ee"></div>
<div class="a" style="left:175px;top:607px;width:1049px;height:1px;background:#e6e6ea"></div>
<div class="a tx" style="left:177px;top:580px;color:#000">Plasma Seq 1</div>
<div class="a" style="left:317px;top:582px;width:1px;height:26px;background:#e2e2e6"></div>
<div class="a tx" style="left:320.5px;top:580px;color:#000">18.11.2022</div>
<div class="a" style="left:410px;top:582px;width:1px;height:26px;background:#e2e2e6"></div>
<div class="a tx" style="left:413.5px;top:580px;color:#000">PL</div>
<div class="a" style="left:471px;top:582px;width:1px;height:26px;background:#e2e2e6"></div>
<div class="a tx" style="left:474.5px;top:580px;color:#000">A36</div>
<div class="a" style="left:554px;top:582px;width:1px;height:26px;background:#e2e2e6"></div>
<div class="a tx" style="left:557.5px;top:580px;color:#000">11/16 x 48</div>
<div class="a" style="left:697px;top:582px;width:1px;height:26px;background:#e2e2e6"></div>
<div class="a tx" style="left:700.5px;top:580px;color:#000">8'-0</div>
<div class="a" style="left:792px;top:582px;width:1px;height:26px;background:#e2e2e6"></div>
<div class="a tx" style="left:795.5px;top:580px;color:#000">28,31SqFt</div>
<div class="a" style="left:887px;top:582px;width:1px;height:26px;background:#e2e2e6"></div>
<div class="a tx" style="left:890.5px;top:580px;color:#000">88,48%</div>
<div class="a" style="left:961px;top:582px;width:1px;height:26px;background:#e2e2e6"></div>
<div class="a tx" style="left:964.5px;top:580px;color:#000">On Order</div>
<div class="a" style="left:1041px;top:582px;width:1px;height:26px;background:#e2e2e6"></div>
<div class="a" style="left:1224px;top:83px;width:20px;height:531px;background:#f2f2f6"></div>
<div class="a" style="left:1224px;top:57px;width:20px;height:445px;background:#d1d1d6"></div>
<svg class="a" style="left:1229px;top:63px" width="10" height="8" viewBox="0 0 10 8"><path d="M1 7 L4.6 1.3 L8.2 7 Z" fill="#4a4a4a"/></svg>
<div class="a" style="left:1224px;top:614px;width:20px;height:17px;background:#d1d1d6"></div>
<svg class="a" style="left:1229px;top:620px" width="10" height="8" viewBox="0 0 10 8"><path d="M1 1 L8.2 1 L4.6 6.8 Z" fill="#4a4a4a"/></svg>
<div class="a" style="left:175px;top:608px;width:1049px;height:2px;background:#f2f2f6"></div>
<div class="a" style="left:175px;top:610px;width:42px;height:21px;background:#d1d1d6"></div>
<svg class="a" style="left:180px;top:615px" width="8" height="11" viewBox="0 0 8 11"><path d="M6.5 1.5 L1.5 5.5 L6.5 9.5 Z" fill="#4a4a4a"/></svg>
<div class="a" style="left:1202px;top:610px;width:22px;height:21px;background:#d1d1d6"></div>
<svg class="a" style="left:1208px;top:615px" width="9" height="11" viewBox="0 0 9 11"><path d="M1.6 1.2 L7.4 5 L1.6 9 Z" fill="#4a4a4a"/></svg>
<div class="a btn" style="left:173px;top:642px;width:169px;height:29px;line-height:29px">Details</div>
<div class="a btn" style="left:353px;top:642px;width:170px;height:29px;line-height:29px">Delete</div>
<div class="a btn" style="left:535px;top:642px;width:168px;height:29px;line-height:29px">Swap Material</div>
<div class="a btn dis" style="left:713px;top:641px;width:172px;height:31px;line-height:29px">Validate</div>
<div class="a btn dis" style="left:894px;top:641px;width:172px;height:31px;line-height:29px">Re-Validate</div>
<div class="a btn" style="left:1076px;top:642px;width:169px;height:29px;line-height:29px">Cut</div>
<div class="a" style="left:167px;top:358px;width:2px;height:2px;background:#5a5a5a"></div>
<div class="a" style="left:167px;top:362px;width:2px;height:2px;background:#5a5a5a"></div>
<div class="a" style="left:167px;top:366px;width:2px;height:2px;background:#5a5a5a"></div>
<svg class="a" style="left:0;top:0" width="14" height="22" viewBox="0 0 14 22"><path d="M-1.5 2.2 L8.7 11.9 L4.9 12.1 L6.9 17.5 L4.5 18.6 L2.4 13.5 L-1.5 16.8 Z" fill="#fff" stroke="#000" stroke-width="1.3" stroke-linejoin="miter"/></svg>
</body></html>
